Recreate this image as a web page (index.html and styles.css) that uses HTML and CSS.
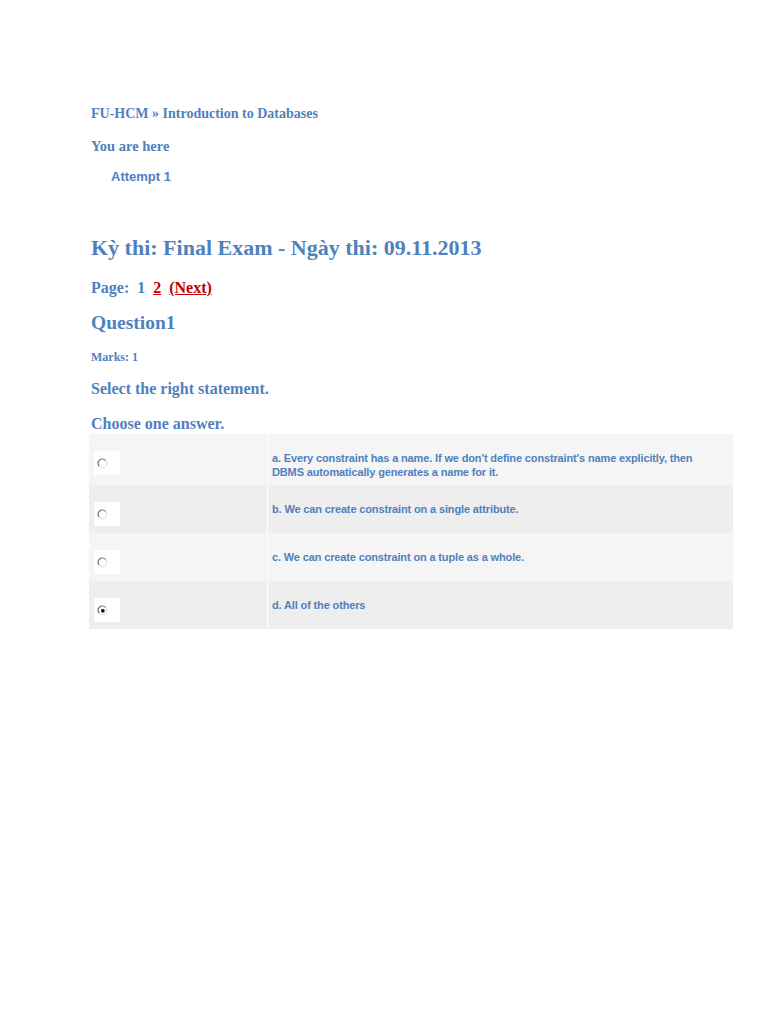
FILE: index.html
```html
<!DOCTYPE html>
<html>
<head>
<meta charset="utf-8">
<link rel="stylesheet" href="styles.css">
</head>
<body>
<div class="page">
  <p class="crumb">FU-HCM » Introduction to Databases</p>
  <p class="here">You are here</p>
  <p class="attempt">Attempt 1</p>
  <h1 class="title">Kỳ thi: Final Exam - Ngày thi: 09.11.2013</h1>
  <p class="pager">Page:&nbsp; 1&nbsp; <a class="plink">2</a>&nbsp; <a class="plink">(Next)</a></p>
  <h2 class="qtitle">Question1</h2>
  <p class="marks">Marks: 1</p>
  <p class="prompt">Select the right statement.</p>
  <p class="prompt choose">Choose one answer.</p>
  <div class="answers">
    <div class="row light">
      <div class="pick"><span class="box"><svg class="radio" width="11" height="11" viewBox="0 0 11 11"><circle cx="5.5" cy="5.5" r="4.3" fill="#fff" stroke="#d8d8d8" stroke-width="1"/><path d="M2.2 8.2 A4.3 4.3 0 0 1 8.5 2.3" fill="none" stroke="#6a6a6a" stroke-width="1.1"/></svg></span></div>
      <div class="text">a. Every constraint has a name. If we don't define constraint's name explicitly, then<br>DBMS automatically generates a name for it.</div>
    </div>
    <div class="row dark">
      <div class="pick"><span class="box"><svg class="radio" width="11" height="11" viewBox="0 0 11 11"><circle cx="5.5" cy="5.5" r="4.3" fill="#fff" stroke="#d8d8d8" stroke-width="1"/><path d="M2.2 8.2 A4.3 4.3 0 0 1 8.5 2.3" fill="none" stroke="#6a6a6a" stroke-width="1.1"/></svg></span></div>
      <div class="text">b. We can create constraint on a single attribute.</div>
    </div>
    <div class="row light">
      <div class="pick"><span class="box"><svg class="radio" width="11" height="11" viewBox="0 0 11 11"><circle cx="5.5" cy="5.5" r="4.3" fill="#fff" stroke="#d8d8d8" stroke-width="1"/><path d="M2.2 8.2 A4.3 4.3 0 0 1 8.5 2.3" fill="none" stroke="#6a6a6a" stroke-width="1.1"/></svg></span></div>
      <div class="text">c. We can create constraint on a tuple as a whole.</div>
    </div>
    <div class="row dark">
      <div class="pick"><span class="box"><svg class="radio" width="11" height="11" viewBox="0 0 11 11"><circle cx="5.5" cy="5.5" r="4.3" fill="#fff" stroke="#d8d8d8" stroke-width="1"/><path d="M2.2 8.2 A4.3 4.3 0 0 1 8.5 2.3" fill="none" stroke="#6a6a6a" stroke-width="1.1"/><circle cx="5.8" cy="5.8" r="1.9" fill="#111"/></svg></span></div>
      <div class="text">d. All of the others</div>
    </div>
  </div>
</div>
</body>
</html>
```
FILE: styles.css
```css
html, body {
  margin: 0;
  padding: 0;
  background: #ffffff;
}
.page {
  padding: 104px 35px 0 91px;
  font-family: "Liberation Serif", "Times New Roman", serif;
  font-weight: bold;
  color: #4f81bd;
}
p, h1, h2 {
  margin: 0;
}
.crumb {
  font-size: 14px;
  line-height: 20px;
}
.here {
  font-size: 14.5px;
  line-height: 20px;
  margin-top: 12px;
}
.attempt {
  font-family: "Liberation Sans", Arial, sans-serif;
  font-size: 13px;
  line-height: 20px;
  margin: 11px 0 0 20px;
}
.title {
  font-size: 22px;
  line-height: 28px;
  font-weight: bold;
  margin-top: 47px;
}
.pager {
  font-size: 16px;
  line-height: 20px;
  margin-top: 16px;
}
.plink {
  color: #c00000;
  text-decoration: underline;
}
.qtitle {
  font-size: 19.5px;
  line-height: 24px;
  font-weight: bold;
  margin-top: 13px;
}
.marks {
  font-size: 12px;
  line-height: 16px;
  margin-top: 14px;
}
.prompt {
  font-size: 16px;
  line-height: 20px;
  margin-top: 14px;
}
.choose {
  margin-top: 15px;
}
.answers {
  margin: 0 0 0 -2px;
  width: 644px;
}
.row {
  display: flex;
  min-height: 48px;
}
.row.light {
  background: #f5f5f5;
}
.row.dark {
  background: #eeeeee;
}
.pick {
  width: 178px;
  flex: none;
  padding: 17px 0 0 5px;
  box-sizing: border-box;
}
.box {
  display: flex;
  align-items: center;
  width: 26px;
  height: 24px;
  background: #ffffff;
  padding-left: 3px;
  box-sizing: border-box;
}
.radio {
  display: block;
}
.text {
  flex: 1;
  border-left: 1px solid #ffffff;
  padding: 17px 4px 6px 4px;
  font-family: "Liberation Sans", Arial, sans-serif;
  font-size: 11px;
  line-height: 14px;
  letter-spacing: -0.14px;
  color: #4f81bd;
}
```
